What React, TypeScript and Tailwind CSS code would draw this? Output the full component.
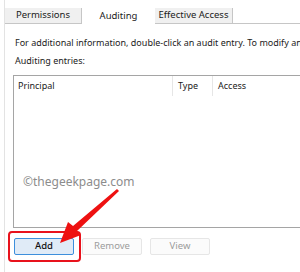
import React from 'react';

const tabs = [
  { label: 'Permissions', width: 'w-[77px]', active: false },
  { label: 'Auditing', width: 'w-[73px]', active: true },
  { label: 'Effective Access', width: 'w-[78px]', active: false }
];

// Callout drawn on top of the dialog: red box round "Add" and the arrow pointing at it
const Callout: React.FC = () => (
  <svg className="pointer-events-none absolute left-0 top-0" width="300" height="272" viewBox="0 0 300 272">
    <rect x="9" y="232" width="71" height="29" rx="3" fill="none" stroke="#e8121c" strokeWidth="2" />
    <polygon
      points="117,189 119,191 77,231 81,235 60,243 68,222 73,226"
      fill="#ee1111"
    />
  </svg>
);

const App: React.FC = () => {
  return (
    <div className="relative h-[272px] w-[300px] overflow-hidden bg-white pl-[4px] font-['Noto_Sans',sans-serif] text-[9px] text-[#1b1b1b]">
      <div className="flex h-full flex-col border-l border-[#e3e3e3]">
        {/* tab strip */}
        <div className="mt-[8px] flex h-[16px] text-[9.5px]">
          {tabs.map((tab) => (
            <div
              key={tab.label}
              className={`flex ${tab.width} items-center justify-center ${
                tab.active ? 'bg-white' : 'border-b border-r border-[#c6c6c6] bg-[#f0f0f0]'
              }`}
            >
              {tab.label}
            </div>
          ))}
          <div className="flex-1 border-b border-[#c6c6c6]" />
        </div>

        <div className="mt-[12px] overflow-hidden whitespace-nowrap pl-[10px] leading-[14px]">
          For additional information, double-click an audit entry. To modify an
        </div>
        <div className="mt-[4px] pl-[10px] leading-[14px]">Auditing entries:</div>

        {/* entries list */}
        <div className="ml-[8px] mt-[7px] h-[153px] w-[300px] border-b border-l border-t border-[#a5a5a5] bg-white">
          <div className="flex h-[20px] items-center">
            <div className="flex h-full w-[159px] items-center border-r border-[#e6e6e6] pl-[4px]">Principal</div>
            <div className="flex h-full w-[40px] items-center border-r border-[#e6e6e6] pl-[5px]">Type</div>
            <div className="pl-[5px]">Access</div>
          </div>
          <div className="mt-[78px] pl-[9px] text-[12px] leading-[16px] text-[#8c8c8c]">©thegeekpage.com</div>
        </div>

        {/* buttons */}
        <div className="ml-[9px] mt-[10px] flex gap-[8px]">
          <button className="h-[17px] w-[60px] rounded-[2px] border border-[#3d8fdc] bg-[#e0ebf7] text-[9.5px] font-medium text-[#111]">
            Add
          </button>
          <button className="h-[17px] w-[60px] rounded-[2px] border border-[#e6e6e6] bg-[#fbfbfb] text-[9.5px] text-[#9c9c9c]">
            Remove
          </button>
          <button className="h-[17px] w-[60px] rounded-[2px] border border-[#e6e6e6] bg-[#fbfbfb] text-[9.5px] text-[#9c9c9c]">
            View
          </button>
        </div>
      </div>
      <Callout />
    </div>
  );
};

export default App;
